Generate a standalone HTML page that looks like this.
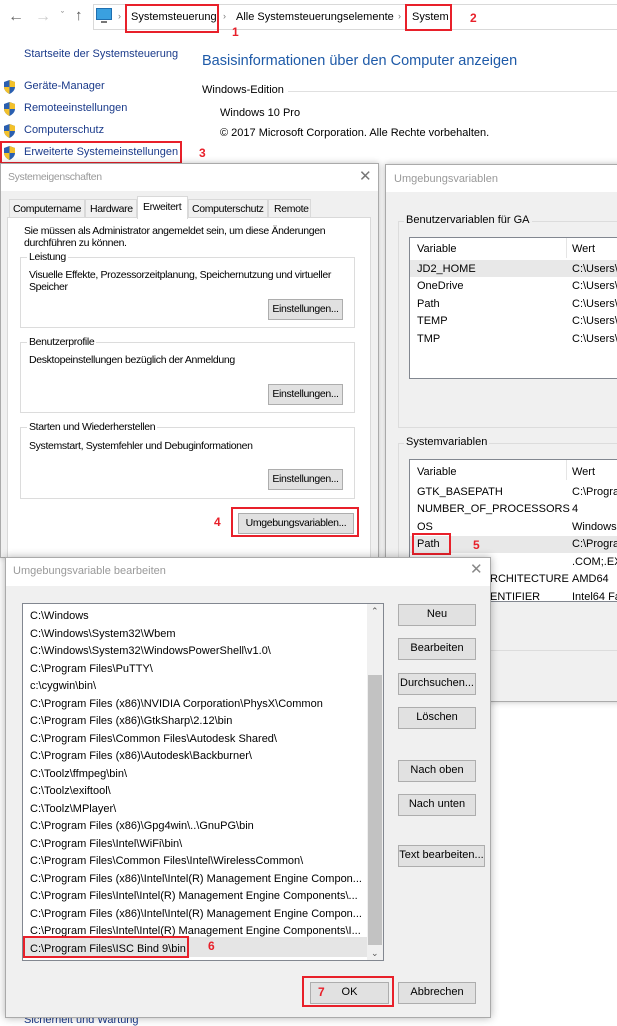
<!DOCTYPE html>
<html><head><meta charset="utf-8"><style>
*{margin:0;padding:0;box-sizing:border-box}
body{width:617px;height:1024px;overflow:hidden;background:#fff;font-family:"Liberation Sans",sans-serif;font-size:11px;color:#000;position:relative}
.a{position:absolute;white-space:nowrap}
.red{position:absolute;border:2px solid #e8202a}
.num{position:absolute;color:#e8202a;font-weight:bold;font-size:12px}
.btn{position:absolute;background:#e1e1e1;border:1px solid #adadad;text-align:center;font-size:11px;line-height:19px}
.grp{position:absolute;border:1px solid #dcdcdc}
.gl{position:absolute;background:#fff;padding:0 2px;font-size:11px}
.link{color:#1a3a8a;font-size:11px}
.sh{position:absolute;width:13px;height:14px}
.cz,.cz *{font-size:10.5px;letter-spacing:-0.35px}
</style></head><body>
<!-- address bar -->
<div class="a" style="left:8px;top:8px;font-size:16px;color:#666">&#8592;</div>
<div class="a" style="left:35px;top:8px;font-size:16px;color:#ccc">&#8594;</div>
<div class="a" style="left:61px;top:10px;font-size:9px;color:#666">&#711;</div>
<div class="a" style="left:75px;top:7px;font-size:15px;color:#555">&#8593;</div>
<div class="a" style="left:93px;top:4px;width:530px;height:26px;border:1px solid #d9d9d9"></div>
<div class="a" style="left:96px;top:8px;width:16px;height:12px;background:#3aa0e0;border:1px solid #1f6fb0"></div>
<div class="a" style="left:101px;top:21px;width:6px;height:2px;background:#777"></div>
<div class="a" style="left:118px;top:11px;color:#777;font-size:9px">›</div>
<div class="a" style="left:131px;top:11px">Systemsteuerung</div>
<div class="red" style="left:125px;top:4px;width:94px;height:29px"></div>
<div class="a" style="left:223px;top:11px;color:#777;font-size:9px">›</div>
<div class="a" style="left:236px;top:11px">Alle Systemsteuerungselemente</div>
<div class="a" style="left:398px;top:11px;color:#777;font-size:9px">›</div>
<div class="a" style="left:412px;top:11px">System</div>
<div class="red" style="left:405px;top:4px;width:47px;height:27px"></div>
<div class="num" style="left:232px;top:25px">1</div>
<div class="num" style="left:470px;top:11px">2</div>
<!-- left links -->
<div class="a link" style="left:24px;top:48px">Startseite der Systemsteuerung</div>
<div class="a" style="left:202px;top:53px;font-size:14.5px;color:#1e5aa8">Basisinformationen über den Computer anzeigen</div>
<div class="a" style="left:202px;top:84px">Windows-Edition</div>
<div class="a" style="left:288px;top:91px;width:330px;height:1px;background:#e0e0e0"></div>
<div class="a" style="left:220px;top:107px">Windows 10 Pro</div>
<div class="a" style="left:220px;top:127px">© 2017 Microsoft Corporation. Alle Rechte vorbehalten.</div>
<svg class="sh" style="left:3px;top:80px" viewBox="0 0 13 14"><path d="M6.5 0L12 2v5c0 3-2.5 5.5-5.5 7C3.5 12.5 1 10 1 7V2z" fill="#2a5fb0"/><path d="M6.5 0L12 2v5H6.5zM1 7h5.5v7C3.5 12.5 1 10 1 7z" fill="#f3c12b"/></svg>
<div class="a link" style="left:24px;top:80px">Geräte-Manager</div>
<svg class="sh" style="left:3px;top:102px" viewBox="0 0 13 14"><path d="M6.5 0L12 2v5c0 3-2.5 5.5-5.5 7C3.5 12.5 1 10 1 7V2z" fill="#2a5fb0"/><path d="M6.5 0L12 2v5H6.5zM1 7h5.5v7C3.5 12.5 1 10 1 7z" fill="#f3c12b"/></svg>
<div class="a link" style="left:24px;top:102px">Remoteeinstellungen</div>
<svg class="sh" style="left:3px;top:124px" viewBox="0 0 13 14"><path d="M6.5 0L12 2v5c0 3-2.5 5.5-5.5 7C3.5 12.5 1 10 1 7V2z" fill="#2a5fb0"/><path d="M6.5 0L12 2v5H6.5zM1 7h5.5v7C3.5 12.5 1 10 1 7z" fill="#f3c12b"/></svg>
<div class="a link" style="left:24px;top:124px">Computerschutz</div>
<svg class="sh" style="left:3px;top:146px" viewBox="0 0 13 14"><path d="M6.5 0L12 2v5c0 3-2.5 5.5-5.5 7C3.5 12.5 1 10 1 7V2z" fill="#2a5fb0"/><path d="M6.5 0L12 2v5H6.5zM1 7h5.5v7C3.5 12.5 1 10 1 7z" fill="#f3c12b"/></svg>
<div class="a link" style="left:24px;top:146px">Erweiterte Systemeinstellungen</div>
<div class="red" style="left:0px;top:141px;width:182px;height:23px"></div>
<div class="num" style="left:199px;top:146px">3</div>

<!-- Umgebungsvariablen dialog -->
<div class="a" style="left:385px;top:164px;width:240px;height:538px;background:#f0f0f0;border:1px solid #aaa;box-shadow:0 0 6px rgba(0,0,0,.25)"></div>
<div class="a" style="left:386px;top:165px;width:240px;height:27px;background:#fff"></div>
<div class="a" style="left:394px;top:173px;color:#999">Umgebungsvariablen</div>
<div class="grp" style="left:398px;top:221px;width:230px;height:207px"></div>
<div class="a" style="left:404px;top:214px;background:#f0f0f0;padding:0 2px">Benutzervariablen für GA</div>
<div class="a" style="left:409px;top:237px;width:220px;height:142px;background:#fff;border:1px solid #828790"></div>
<div class="a" style="left:566px;top:238px;width:1px;height:20px;background:#e5e5e5"></div>
<div class="a" style="left:410px;top:260px;width:220px;height:17px;background:#e8e8e8"></div>
<div class="a" style="left:417px;top:243px">Variable</div><div class="a" style="left:572px;top:243px">Wert</div>
<div class="a" style="left:417px;top:263px">JD2_HOME</div><div class="a" style="left:572px;top:263px">C:\Users\</div>
<div class="a" style="left:417px;top:280px">OneDrive</div><div class="a" style="left:572px;top:280px">C:\Users\</div>
<div class="a" style="left:417px;top:298px">Path</div><div class="a" style="left:572px;top:298px">C:\Users\</div>
<div class="a" style="left:417px;top:315px">TEMP</div><div class="a" style="left:572px;top:315px">C:\Users\</div>
<div class="a" style="left:417px;top:333px">TMP</div><div class="a" style="left:572px;top:333px">C:\Users\</div>
<div class="grp" style="left:398px;top:443px;width:230px;height:208px"></div>
<div class="a" style="left:404px;top:436px;background:#f0f0f0;padding:0 2px">Systemvariablen</div>
<div class="a" style="left:409px;top:459px;width:220px;height:143px;background:#fff;border:1px solid #828790"></div>
<div class="a" style="left:566px;top:460px;width:1px;height:20px;background:#e5e5e5"></div>
<div class="a" style="left:410px;top:536px;width:220px;height:17px;background:#e8e8e8"></div>
<div class="a" style="left:417px;top:466px">Variable</div><div class="a" style="left:572px;top:466px">Wert</div>
<div class="a" style="left:417px;top:486px">GTK_BASEPATH</div><div class="a" style="left:572px;top:486px">C:\Progra</div>
<div class="a" style="left:417px;top:503px">NUMBER_OF_PROCESSORS</div><div class="a" style="left:572px;top:503px">4</div>
<div class="a" style="left:417px;top:521px">OS</div><div class="a" style="left:572px;top:521px">Windows</div>
<div class="a" style="left:417px;top:538px">Path</div><div class="a" style="left:572px;top:538px">C:\Progra</div>
<div class="a" style="left:572px;top:556px">.COM;.EX</div>
<div class="a" style="left:490px;top:573px">RCHITECTURE</div><div class="a" style="left:572px;top:573px">AMD64</div>
<div class="a" style="left:490px;top:591px">ENTIFIER</div><div class="a" style="left:572px;top:591px">Intel64 Fa</div>
<div class="red" style="left:412px;top:533px;width:39px;height:22px"></div>
<div class="num" style="left:473px;top:538px">5</div>

<!-- Systemeigenschaften dialog -->
<div class="cz">
<div class="a" style="left:0;top:163px;width:379px;height:395px;background:#f0f0f0;border:1px solid #aaa;box-shadow:0 0 6px rgba(0,0,0,.25)"></div>
<div class="a" style="left:1px;top:164px;width:377px;height:27px;background:#fff"></div>
<div class="a" style="left:8px;top:171px;color:#999">Systemeigenschaften</div>
<div class="a" style="left:359px;top:167px;font-size:15px;color:#777">✕</div>
<div class="a" style="left:7px;top:217px;width:364px;height:341px;background:#fff;border:1px solid #d9d9d9"></div>
<div class="a" style="left:9px;top:199px;width:76px;height:19px;border:1px solid #d9d9d9;background:#f0f0f0;padding:3px 0 0 3px">Computername</div>
<div class="a" style="left:85px;top:199px;width:52px;height:19px;border:1px solid #d9d9d9;background:#f0f0f0;padding:3px 0 0 4px">Hardware</div>
<div class="a" style="left:137px;top:196px;width:51px;height:23px;border:1px solid #d9d9d9;border-bottom:none;background:#fff;padding:4px 0 0 5px">Erweitert</div>
<div class="a" style="left:188px;top:199px;width:80px;height:19px;border:1px solid #d9d9d9;background:#f0f0f0;padding:3px 0 0 3px">Computerschutz</div>
<div class="a" style="left:268px;top:199px;width:43px;height:19px;border:1px solid #d9d9d9;background:#f0f0f0;padding:3px 0 0 5px">Remote</div>
<div class="a" style="left:24px;top:225px;line-height:12px">Sie müssen als Administrator angemeldet sein, um diese Änderungen<br>durchführen zu können.</div>
<div class="grp" style="left:20px;top:257px;width:335px;height:71px"></div>
<div class="gl" style="left:27px;top:251px">Leistung</div>
<div class="a" style="left:29px;top:269px;line-height:12px">Visuelle Effekte, Prozessorzeitplanung, Speichernutzung und virtueller<br>Speicher</div>
<div class="btn" style="left:268px;top:299px;width:75px;height:21px">Einstellungen...</div>
<div class="grp" style="left:20px;top:342px;width:335px;height:71px"></div>
<div class="gl" style="left:27px;top:336px">Benutzerprofile</div>
<div class="a" style="left:29px;top:354px">Desktopeinstellungen bezüglich der Anmeldung</div>
<div class="btn" style="left:268px;top:384px;width:75px;height:21px">Einstellungen...</div>
<div class="grp" style="left:20px;top:427px;width:335px;height:72px"></div>
<div class="gl" style="left:27px;top:421px">Starten und Wiederherstellen</div>
<div class="a" style="left:29px;top:440px">Systemstart, Systemfehler und Debuginformationen</div>
<div class="btn" style="left:268px;top:469px;width:75px;height:21px">Einstellungen...</div>
<div class="btn" style="left:238px;top:513px;width:116px;height:21px">Umgebungsvariablen...</div>
</div>
<div class="red" style="left:231px;top:507px;width:128px;height:30px"></div>
<div class="num" style="left:214px;top:515px">4</div>

<div class="a" style="left:24px;top:1014px;color:#1a3a8a">Sicherheit und Wartung</div>
<!-- edit dialog -->
<div class="a" style="left:5px;top:557px;width:486px;height:461px;background:#f0f0f0;border:1px solid #aaa;box-shadow:0 0 8px rgba(0,0,0,.3)"></div>
<div class="a" style="left:6px;top:558px;width:484px;height:28px;background:#fff"></div>
<div class="a" style="left:13px;top:565px;color:#999">Umgebungsvariable bearbeiten</div>
<div class="a" style="left:470px;top:560px;font-size:15px;color:#888">✕</div>
<div class="a" style="left:22px;top:603px;width:362px;height:358px;background:#fff;border:1px solid #828790"></div>
<div class="a" style="left:367px;top:604px;width:16px;height:356px;background:#f0f0f0"></div>
<div class="a" style="left:368px;top:675px;width:14px;height:270px;background:#c2c2c2"></div>
<div class="a" style="left:371px;top:606px;font-size:9px;color:#555">&#8963;</div>
<div class="a" style="left:371px;top:948px;font-size:9px;color:#555">&#8964;</div>
<div class="a" style="left:23px;top:937px;width:344px;height:20px;background:#e5e5e5"></div>
<div class="a" style="left:30px;top:608px;line-height:17.5px">C:\Windows<br>C:\Windows\System32\Wbem<br>C:\Windows\System32\WindowsPowerShell\v1.0\<br>C:\Program Files\PuTTY\<br>c:\cygwin\bin\<br>C:\Program Files (x86)\NVIDIA Corporation\PhysX\Common<br>C:\Program Files (x86)\GtkSharp\2.12\bin<br>C:\Program Files\Common Files\Autodesk Shared\<br>C:\Program Files (x86)\Autodesk\Backburner\<br>C:\Toolz\ffmpeg\bin\<br>C:\Toolz\exiftool\<br>C:\Toolz\MPlayer\<br>C:\Program Files (x86)\Gpg4win\..\GnuPG\bin<br>C:\Program Files\Intel\WiFi\bin\<br>C:\Program Files\Common Files\Intel\WirelessCommon\<br>C:\Program Files (x86)\Intel\Intel(R) Management Engine Compon...<br>C:\Program Files\Intel\Intel(R) Management Engine Components\...<br>C:\Program Files (x86)\Intel\Intel(R) Management Engine Compon...<br>C:\Program Files\Intel\Intel(R) Management Engine Components\I...<br>C:\Program Files\ISC Bind 9\bin</div>
<div class="red" style="left:23px;top:936px;width:166px;height:22px"></div>
<div class="num" style="left:208px;top:939px">6</div>
<div class="btn" style="left:398px;top:604px;width:78px;height:22px">Neu</div>
<div class="btn" style="left:398px;top:638px;width:78px;height:22px">Bearbeiten</div>
<div class="btn" style="left:398px;top:673px;width:78px;height:22px">Durchsuchen...</div>
<div class="btn" style="left:398px;top:707px;width:78px;height:22px">Löschen</div>
<div class="btn" style="left:398px;top:760px;width:78px;height:22px">Nach oben</div>
<div class="btn" style="left:398px;top:794px;width:78px;height:22px">Nach unten</div>
<div class="btn" style="left:398px;top:845px;width:87px;height:22px">Text bearbeiten...</div>
<div class="btn" style="left:310px;top:982px;width:79px;height:22px">OK</div>
<div class="btn" style="left:398px;top:982px;width:78px;height:22px">Abbrechen</div>
<div class="red" style="left:302px;top:976px;width:92px;height:31px"></div>
<div class="num" style="left:318px;top:985px">7</div>
</body></html>
